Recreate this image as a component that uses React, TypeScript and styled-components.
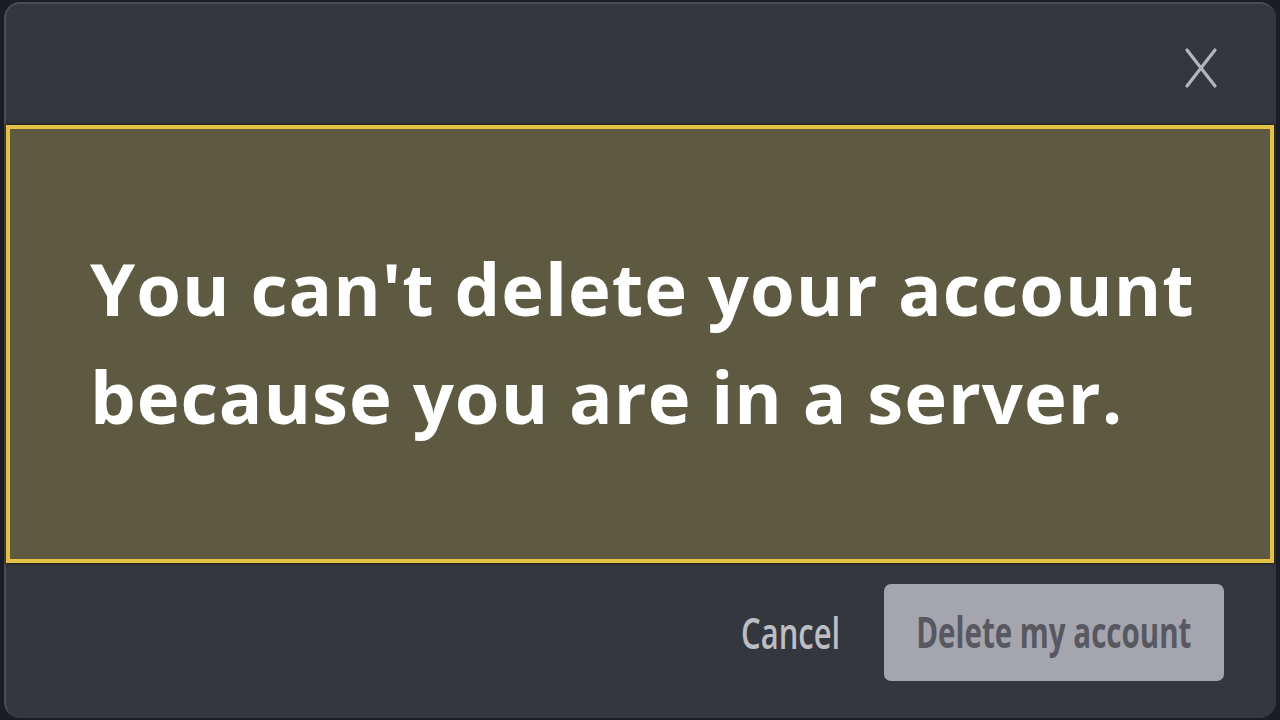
import React from "react";
import styled, { createGlobalStyle } from "styled-components";

const Global = createGlobalStyle`
  html, body { margin: 0; padding: 0; background: #1c1d22; }
  body { width: 1280px; height: 720px; overflow: hidden; }
`;

const Modal = styled.div`
  box-sizing: border-box;
  margin: 2px 4px 0 4px;
  width: 1272px;
  height: 716px;
  background: #35373f;
  border-radius: 16px;
  border-top: 2px solid #4a4c55;
  border-left: 2px solid #4a4c55;
  display: flex;
  flex-direction: column;
  font-family: "Open Sans", "DejaVu Sans", sans-serif;
`;

const Header = styled.div`
  height: 121px;
  display: flex;
  justify-content: flex-end;
  align-items: center;
  padding-right: 58px;
`;

const CloseButton = styled.button`
  background: none;
  border: none;
  padding: 0;
  width: 34px;
  height: 42px;
  display: flex;
  align-items: center;
  justify-content: center;
  margin-top: 6px;
  cursor: pointer;
`;

const Banner = styled.div`
  box-sizing: border-box;
  width: 1268px;
  height: 438px;
  background: #5e5a42;
  border: 4px solid #e2c244;
  box-shadow: 0 0 3px 1px rgba(20, 18, 5, 0.6);
  display: flex;
  align-items: center;
  padding-left: 80px;
  padding-bottom: 4px;
`;

const Message = styled.h1`
  margin: 0;
  color: #ffffff;
  font-family: "Open Sans", sans-serif;
  font-weight: 700;
  font-size: 72.4px;
  line-height: 108px;
  letter-spacing: 1px;
  white-space: nowrap;
`;

const Footer = styled.div`
  flex: 1;
  display: flex;
  justify-content: flex-end;
  align-items: flex-start;
  padding-top: 21px;
  padding-right: 52px;
  gap: 36px;
`;

const CancelButton = styled.button`
  background: none;
  border: none;
  padding: 0;
  height: 97px;
  color: #bcbec4;
  font-family: "Open Sans", sans-serif;
  font-size: 36px;
  font-weight: 600;
  transform: scaleY(1.22) scaleX(0.86);
  cursor: pointer;
`;

const DeleteButton = styled.button`
  width: 340px;
  height: 97px;
  border: none;
  border-radius: 7px;
  background: #a4a5ad;
  color: #575861;
  font-family: "Open Sans", sans-serif;
  font-weight: 700;
  font-size: 36px;
  white-space: nowrap;
  display: flex;
  align-items: center;
  justify-content: center;
  padding: 0 0 2px 0;
  cursor: not-allowed;
`;

const DeleteLabel = styled.span`
  display: inline-block;
  transform: scaleY(1.2) scaleX(0.82);
`;

export default function App() {
  return (
    <>
      <Global />
      <Modal>
        <Header>
          <CloseButton aria-label="Close">
            <svg width="34" height="42" viewBox="0 0 34 42">
              <path d="M3 3 L31 39 M31 3 L3 39" stroke="#b4b6bc" strokeWidth="3.2" strokeLinecap="round" fill="none" />
            </svg>
          </CloseButton>
        </Header>
        <Banner>
          <Message>
            You can't delete your account
            <br />
            because you are in a server.
          </Message>
        </Banner>
        <Footer>
          <CancelButton>Cancel</CancelButton>
          <DeleteButton>
            <DeleteLabel>Delete my account</DeleteLabel>
          </DeleteButton>
        </Footer>
      </Modal>
    </>
  );
}
